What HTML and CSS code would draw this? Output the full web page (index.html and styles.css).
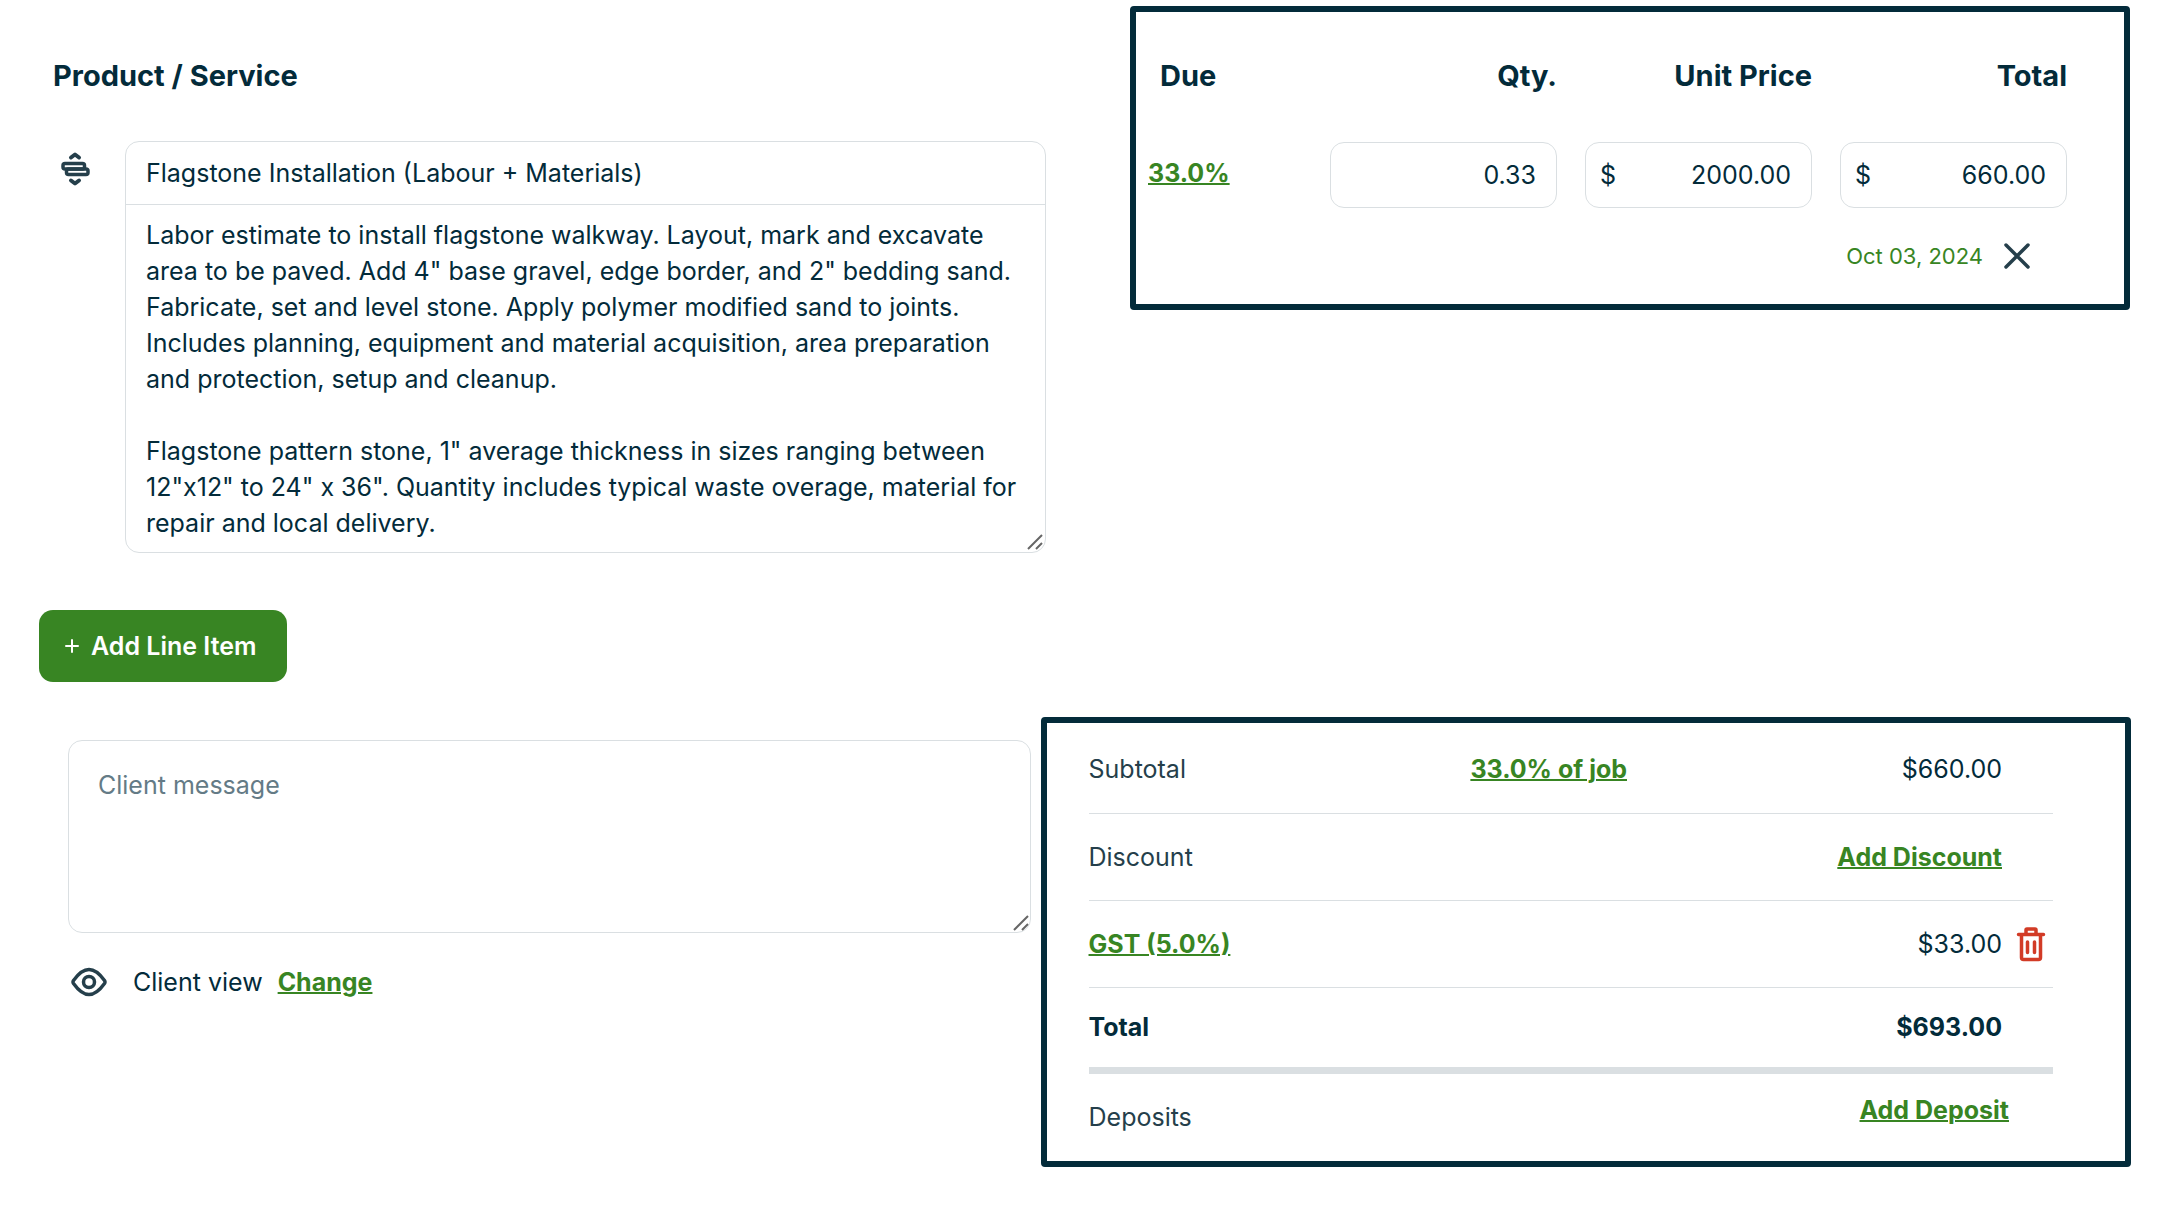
FILE: index.html
```html
<!DOCTYPE html>
<html lang="en">
<head>
  <meta charset="UTF-8" />
  <title>Invoice Line Items</title>
  <link rel="stylesheet" href="styles.css">
</head>
<body>
  <div class="line-items">
    <section class="product">
      <h2>Product / Service</h2>
      <div class="product-row">
        <button class="icon-btn drag" aria-label="Reorder line item">
          <svg width="31" height="34" viewBox="0 0 31 34" fill="none" stroke="#253f4b" stroke-width="4" stroke-linecap="round" stroke-linejoin="round">
            <path d="M11 5.500l4-3 4 3M11 28.500l4 3 4-3"/>
            <rect x="3" y="11.500" width="21.500" height="5.500" rx="2" stroke-width="3.500"/>
            <rect x="6.500" y="17" width="21.500" height="5.500" rx="2" stroke-width="3.500"/>
          </svg>
        </button>
        <div class="item-card resizable">
          <input class="item-name" type="text" aria-label="Name" value="Flagstone Installation (Labour + Materials)">
          <textarea class="item-desc" aria-label="Description">Labor estimate to install flagstone walkway. Layout, mark and excavate area to be paved. Add 4" base gravel, edge border, and 2" bedding sand. Fabricate, set and level stone. Apply polymer modified sand to joints. Includes planning, equipment and material acquisition, area preparation and protection, setup and cleanup.

Flagstone pattern stone, 1" average thickness in sizes ranging between 12"x12" to 24" x 36". Quantity includes typical waste overage, material for repair and local delivery.</textarea>
          <svg class="grip" width="16" height="16" viewBox="0 0 16 16" stroke="#666" stroke-width="2">
            <path d="M1 15L15 1M9 15l6-6"/>
          </svg>
        </div>
      </div>
    </section>

    <section class="box pricing">
      <h2 class="due">Due</h2>
      <h2><label for="qty">Qty.</label></h2>
      <h2><label for="price">Unit Price</label></h2>
      <h2><label for="total">Total</label></h2>

      <a class="link due-link" href="#">33.0%</a>
      <div class="field"><input id="qty" type="text" value="0.33"></div>
      <div class="field"><span>$</span><input id="price" type="text" value="2000.00"></div>
      <div class="field"><span>$</span><input id="total" type="text" value="660.00"></div>

      <div class="date">
        <a href="#">Oct 03, 2024</a>
        <button class="icon-btn" aria-label="Clear date">
          <svg width="28" height="28" viewBox="0 0 28 28" stroke="#253f4b" stroke-width="3.500" stroke-linecap="round">
            <path d="M3 3l22 22M25 3L3 25"/>
          </svg>
        </button>
      </div>
    </section>
  </div>

  <button class="add-btn">
    <svg width="14" height="14" viewBox="0 0 14 14" stroke="#fff" stroke-width="2" stroke-linecap="round">
      <path d="M7 1v12M1 7h12"/>
    </svg>
    Add Line Item
  </button>

  <div class="footer">
    <section class="client">
      <div class="resizable">
        <textarea class="message" aria-label="Client message" placeholder="Client message"></textarea>
        <svg class="grip" width="16" height="16" viewBox="0 0 16 16" stroke="#666" stroke-width="2">
          <path d="M1 15L15 1M9 15l6-6"/>
        </svg>
      </div>
      <div class="client-view">
        <svg width="36" height="30" viewBox="0 0 36 30" fill="none" stroke="#253f4b" stroke-width="3.500">
          <path d="M2.500 16.500Q1.500 15 2.500 13.500C7.500 6.500 12.500 2.500 18 2.500S28.500 6.500 33.500 13.500Q34.500 15 33.500 16.500C28.500 23.500 23.500 27.500 18 27.500S7.500 23.500 2.500 16.500z" stroke-linejoin="round"/>
          <circle cx="18" cy="15" r="5.500"/>
        </svg>
        <span>Client view</span>
        <a class="link" href="#">Change</a>
      </div>
    </section>

    <section class="box totals">
      <table>
        <tr>
          <th>Subtotal</th>
          <td><a class="link" href="#">33.0% of job</a></td>
          <td class="amount">$660.00</td>
          <td class="action"></td>
        </tr>
        <tr>
          <th>Discount</th>
          <td colspan="2"><a class="link" href="#">Add Discount</a></td>
          <td class="action"></td>
        </tr>
        <tr>
          <th><a class="link" href="#">GST (5.0%)</a></th>
          <td colspan="2">$33.00</td>
          <td class="action">
            <button class="icon-btn" aria-label="Remove tax">
              <svg width="30" height="36" viewBox="0 0 30 36" fill="none" stroke="#d23b26" stroke-width="3.500" stroke-linecap="round" stroke-linejoin="round">
                <path d="M2.500 8.500h25M5.500 8.500v23q0 2 2 2h15q2 0 2-2v-23M10 8V4q0-1 1-1h8q1 0 1 1v4M11.500 16v10.500M18.500 16v10.500"/>
              </svg>
            </button>
          </td>
        </tr>
        <tr class="grand">
          <th>Total</th>
          <td colspan="2">$693.00</td>
          <td class="action"></td>
        </tr>
        <tr class="deposits">
          <th>Deposits</th>
          <td colspan="3"><a class="link" href="#">Add Deposit</a></td>
        </tr>
      </table>
    </section>
  </div>
</body>
</html>
```
FILE: styles.css
```css
* {
  box-sizing: border-box;
}
body {
  margin: 0;
  padding: 6px 42px 0 39px;
  background: #fff;
  color: #032b3a;
  font-family: Inter, "Liberation Sans", sans-serif;
  font-size: 25px;
  line-height: 36px;
}
h2 {
  margin: 0;
  font-size: 29px;
  line-height: 40px;
  font-weight: 700;
}
input, textarea, button {
  font: inherit;
  color: inherit;
}
input, textarea {
  display: block;
  width: 100%;
  border: none;
  outline: none;
  background: none;
}
.icon-btn {
  display: flex;
  padding: 0;
  border: none;
  background: none;
  cursor: pointer;
}
.link {
  color: #388523;
  font-weight: 700;
  text-decoration: underline;
  text-decoration-thickness: 2px;
}
.box {
  border: 6px solid #032b3a;
  border-radius: 4px;
}

/* resize grip drawn over the corner of a textarea */
.resizable {
  position: relative;
}
.resizable textarea {
  resize: vertical;
}
.resizable textarea::-webkit-resizer {
  display: none;
}
.grip {
  position: absolute;
  right: 2px;
  bottom: 2px;
  pointer-events: none;
}

/* line item */
.line-items {
  display: grid;
  grid-template-columns: 1007fr 1000fr;
  column-gap: 84px;
  align-items: start;
}
.product {
  padding: 50px 0 0 14px;
}
.product-row {
  display: flex;
  align-items: flex-start;
  gap: 34px;
  margin-top: 45px;
}
.drag {
  margin: 11px 0 0 7px;
}
.item-card {
  flex: 1;
  border: 1px solid #dadfe2;
  border-radius: 14px;
}
.item-name {
  height: 63px;
  padding: 0 20px;
  border-bottom: 1px solid #dadfe2;
}
.item-desc {
  height: 347px;
  padding: 12px 20px 0;
  overflow: hidden;
}
.pricing {
  display: grid;
  grid-template-columns: 1fr 227px 227px 227px;
  column-gap: 28px;
  align-items: center;
  padding: 44px 57px 30px 12px;
  text-align: right;
}
.due, .due-link {
  text-align: left;
}
.due {
  padding-left: 12px;
}
.field {
  display: flex;
  align-items: center;
  height: 66px;
  margin-top: 46px;
  padding: 0 20px 0 14px;
  border: 1px solid #dadfe2;
  border-radius: 14px;
}
.field input {
  flex: 1;
  min-width: 0;
  padding: 0;
  text-align: right;
}
.due-link {
  margin-top: 42px;
}
.date {
  grid-column: 1 / -1;
  display: flex;
  justify-content: flex-end;
  align-items: center;
  gap: 20px;
  margin-top: 30px;
  padding-right: 36px;
  font-size: 22px;
}
.date a {
  color: #388523;
  text-decoration: none;
}

.add-btn {
  display: flex;
  align-items: center;
  gap: 12px;
  height: 72px;
  margin-top: 57px;
  padding: 0 30px 0 26px;
  border: none;
  border-radius: 14px;
  background: #388523;
  color: #fff;
  font-weight: 600;
  cursor: pointer;
}

/* client message and totals */
.footer {
  display: grid;
  grid-template-columns: 992fr 1090fr;
  column-gap: 10px;
  align-items: start;
  margin-top: 35px;
}
.client {
  padding: 23px 0 0 29px;
}
.message {
  height: 193px;
  padding: 26px 29px;
  border: 1px solid #dadfe2;
  border-radius: 14px;
}
.message::placeholder {
  color: #647b86;
  opacity: 1;
}
.client-view {
  display: flex;
  align-items: center;
  margin: 31px 0 0 3px;
}
.client-view span {
  margin: 0 15px 0 26px;
}
.totals {
  padding: 3px 72px 0 42px;
  margin-right: -1px;
}
table {
  width: 100%;
  border-collapse: collapse;
}
tr {
  height: 87px;
  border-bottom: 1px solid #dadfe2;
}
th, td {
  padding: 0;
  text-align: right;
}
th {
  color: #253f4b;
  font-weight: 400;
  text-align: left;
}
.amount {
  width: 375px;
}
.action {
  width: 51px;
}
.action .icon-btn {
  margin-left: 14px;
}
.grand {
  height: 83px;
  border-bottom: 7px solid #dadfe2;
}
.grand th, .grand td {
  color: #032b3a;
  font-weight: 700;
}
.deposits {
  height: 91px;
  border-bottom: none;
}
.deposits td {
  padding: 0 44px 14px 0;
}
```
